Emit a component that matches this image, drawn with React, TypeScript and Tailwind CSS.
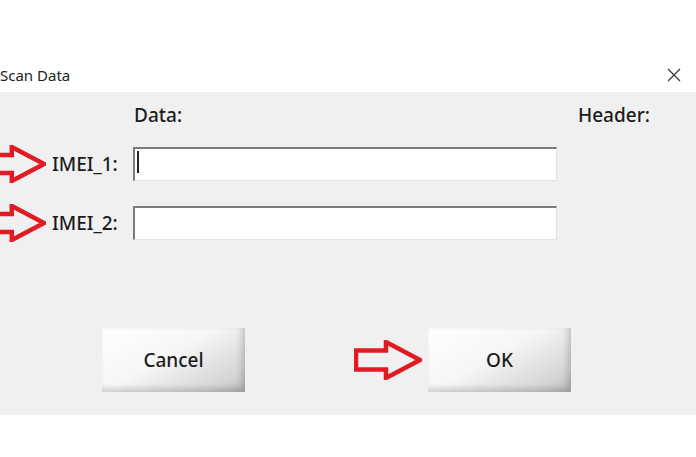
import React from "react";

// contorno rojo de flecha; x0 permite recortar la cola por la izquierda
function Arrow({ w, h, x0 = 2 }: { w: number; h: number; x0?: number }) {
  const head = w - h * 0.9;
  const t = h * 0.26;
  const pts = [
    [x0, t],
    [head, t],
    [head, 2],
    [w - 2, h / 2],
    [head, h - 2],
    [head, h - t],
    [x0, h - t],
  ]
    .map((p) => p.join(","))
    .join(" ");
  return (
    <svg width={w} height={h} viewBox={`0 0 ${w} ${h}`} className="shrink-0">
      <polygon points={pts} fill="none" stroke="#e01b24" strokeWidth={4.5} strokeLinejoin="miter" />
    </svg>
  );
}

function Field({ cursor = false }: { cursor?: boolean }) {
  return (
    <div className="relative h-[34px] w-[424px] border-t-2 border-l-2 border-r border-b border-t-[#7b7b7b] border-l-[#7b7b7b] border-r-[#e3e3e3] border-b-[#e3e3e3] bg-white">
      {cursor && <div className="absolute left-[2px] top-[2px] h-[22px] w-[2px] bg-[#222]" />}
    </div>
  );
}

function Btn({ label }: { label: string }) {
  return (
    <button
      type="button"
      className="h-[64px] w-[143px] shrink-0 bg-[linear-gradient(150deg,#ffffff_0%,#f6f6f6_45%,#d4d4d4_85%,#b9b9b9_100%)] font-['Noto_Sans',sans-serif] text-[19px] font-medium text-[#1c1c1c] shadow-[inset_-3px_-3px_6px_rgba(0,0,0,0.18)]"
    >
      {label}
    </button>
  );
}

export default function App() {
  return (
    <div className="h-[457px] w-[696px] overflow-hidden bg-white font-['Noto_Sans',sans-serif] text-[#1c1c1c]">
      <div className="flex h-[92px] items-start justify-between pt-[65px]">
        <span className="text-[15px] leading-[20px] text-[#222]">Scan Data</span>
        <svg width="14" height="14" viewBox="0 0 14 14" className="mr-[15px] mt-[3px]">
          <path d="M1 1L13 13M13 1L1 13" stroke="#333" strokeWidth="1.2" />
        </svg>
      </div>
      <div className="h-[323px] bg-[#f0f0f0] pt-[11px]">
        <div className="flex pl-[134px] text-[19px] font-medium leading-[24px]">
          <span className="w-[444px]">Data:</span>
          <span>Header:</span>
        </div>
        <div className="mt-[18px] flex items-center">
          <Arrow w={46} h={38} x0={-10} />
          <span className="ml-[6px] w-[81px] text-[19px] font-medium">IMEI_1:</span>
          <Field cursor />
        </div>
        <div className="mt-[21px] flex items-center">
          <Arrow w={46} h={38} x0={-10} />
          <span className="ml-[6px] w-[81px] text-[19px] font-medium">IMEI_2:</span>
          <Field />
        </div>
        <div className="mt-[86px] flex items-center pl-[102px]">
          <Btn label="Cancel" />
          <div className="ml-[109px]">
            <Arrow w={68} h={40} />
          </div>
          <div className="ml-[6px]">
            <Btn label="OK" />
          </div>
        </div>
      </div>
    </div>
  );
}
